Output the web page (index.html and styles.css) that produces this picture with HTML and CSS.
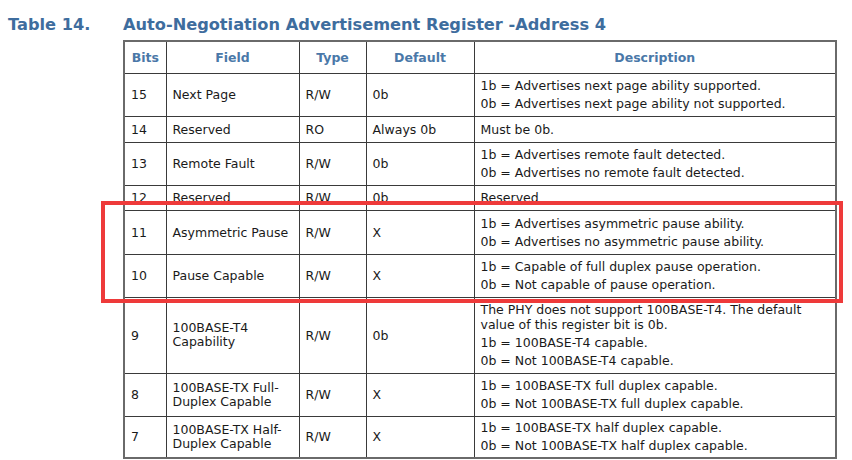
FILE: index.html
```html
<!DOCTYPE html>
<html>
<head>
<meta charset="utf-8">
<link rel="stylesheet" href="styles.css">
</head>
<body>
<div class="page">
  <div class="caption">
    <span class="cap-num">Table 14.</span>
    <span class="cap-title">Auto-Negotiation Advertisement Register -Address 4</span>
  </div>
  <table class="reg">
    <colgroup>
      <col class="c-bits"><col class="c-field"><col class="c-type"><col class="c-def"><col class="c-desc">
    </colgroup>
    <thead>
      <tr class="h-head"><th>Bits</th><th>Field</th><th>Type</th><th>Default</th><th>Description</th></tr>
    </thead>
    <tbody>
      <tr class="h43"><td>15</td><td>Next Page</td><td>R/W</td><td>0b</td><td><p>1b = Advertises next page ability supported.</p><p>0b = Advertises next page ability not supported.</p></td></tr>
      <tr class="h26"><td>14</td><td>Reserved</td><td>RO</td><td>Always 0b</td><td><p>Must be 0b.</p></td></tr>
      <tr class="h43"><td>13</td><td>Remote Fault</td><td>R/W</td><td>0b</td><td><p>1b = Advertises remote fault detected.</p><p>0b = Advertises no remote fault detected.</p></td></tr>
      <tr class="h25"><td>12</td><td>Reserved</td><td>R/W</td><td>0b</td><td><p>Reserved</p></td></tr>
      <tr class="h44"><td>11</td><td>Asymmetric Pause</td><td>R/W</td><td>X</td><td><p>1b = Advertises asymmetric pause ability.</p><p>0b = Advertises no asymmetric pause ability.</p></td></tr>
      <tr class="h43"><td>10</td><td>Pause Capable</td><td>R/W</td><td>X</td><td><p>1b = Capable of full duplex pause operation.</p><p>0b = Not capable of pause operation.</p></td></tr>
      <tr class="h76"><td>9</td><td class="wrap">100BASE-T4<br>Capability</td><td>R/W</td><td>0b</td><td><p>The PHY does not support 100BASE-T4. The default<br>value of this register bit is 0b.</p><p>1b = 100BASE-T4 capable.</p><p>0b = Not 100BASE-T4 capable.</p></td></tr>
      <tr class="h43"><td>8</td><td class="wrap">100BASE-TX Full-<br>Duplex Capable</td><td>R/W</td><td>X</td><td><p>1b = 100BASE-TX full duplex capable.</p><p>0b = Not 100BASE-TX full duplex capable.</p></td></tr>
      <tr class="h42"><td>7</td><td class="wrap">100BASE-TX Half-<br>Duplex Capable</td><td>R/W</td><td>X</td><td><p>1b = 100BASE-TX half duplex capable.</p><p>0b = Not 100BASE-TX half duplex capable.</p></td></tr>
    </tbody>
  </table>
  <div class="highlight"></div>
</div>
</body>
</html>
```
FILE: styles.css
```css
html, body {
  margin: 0;
  padding: 0;
  background: #ffffff;
}
.page {
  position: relative;
  width: 852px;
  height: 460px;
  overflow: hidden;
  font-family: "DejaVu Sans", Verdana, sans-serif;
  color: #1a1a1a;
}
.caption {
  display: flex;
  align-items: baseline;
  padding: 15px 0 0 8px;
  height: 25px;
  font-weight: bold;
  font-size: 16.2px;
  color: #3e6d9e;
}
.cap-num {
  width: 115px;
  flex: none;
}
.reg {
  margin-left: 123px;
  width: 712px;
  border-collapse: collapse;
  table-layout: fixed;
  font-size: 12.5px;
  border: 2px solid #6a6a6a;
}
.c-bits { width: 42px; }
.c-field { width: 133px; }
.c-type { width: 67px; }
.c-def { width: 108px; }
.c-desc { width: 362px; }
.reg th, .reg td {
  border: 1px solid #3a3a3a;
  padding: 0 6px;
  vertical-align: middle;
  text-align: left;
  line-height: 15px;
  white-space: nowrap;
}
.reg th {
  text-align: center;
  font-weight: bold;
  color: #4a78a8;
  font-size: 12.5px;
}
.reg td.wrap { line-height: 14px; }
.reg p { margin: 0; }
.reg p + p { margin-top: 3px; }
.h-head { height: 32px; }
.h25 { height: 25px; }
.h26 { height: 26px; }
.h42 { height: 42px; }
.h43 { height: 43px; }
.h44 { height: 44px; }
.h76 { height: 76px; }
.highlight {
  position: absolute;
  left: 101px;
  top: 201px;
  width: 734px;
  height: 94px;
  border: 4px solid #ee3a3a;
}
```
